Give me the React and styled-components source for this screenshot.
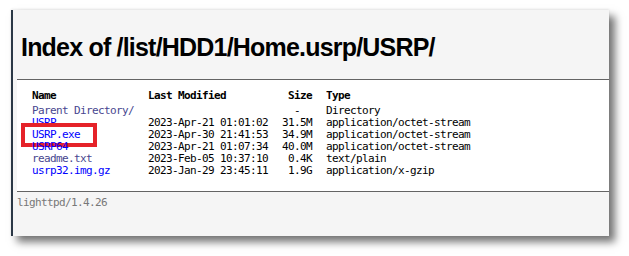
import styled, { createGlobalStyle } from "styled-components";

const GlobalStyle = createGlobalStyle`
  html, body {
    margin: 0;
    padding: 0;
    background: #ffffff;
  }
  body {
    min-height: 256px;
  }
`;

// browser window holding the lighttpd listing
const Window = styled.div`
  margin: 10px 0 0 11px;
  width: 596px;
  height: 226px;
  background-color: #f5f5f5;
  border-left: 2px solid #2b3846;
  box-shadow: 6px 6px 8px rgba(0, 0, 0, 0.55), 0 -1px 2px rgba(0, 0, 0, 0.08);
  display: flex;
  flex-direction: column;
  overflow: hidden;
`;

const Title = styled.h2`
  margin: 22px 0 17px 8px;
  font-family: "Liberation Sans", Arial, sans-serif;
  font-size: 25px;
  letter-spacing: -0.8px;
  line-height: 30px;
  font-weight: bold;
  color: #000000;
  white-space: nowrap;
`;

const List = styled.div`
  margin-left: 4px;
  background-color: #ffffff;
  border-top: 1px solid #646464;
  border-bottom: 1px solid #646464;
  padding: 10px 0 14px 15px;
`;

const mono = `
  font-family: "DejaVu Sans Mono", "Liberation Mono", monospace;
  font-size: 11px;
  letter-spacing: -0.62px;
  line-height: 12px;
`;

const Row = styled.div`
  display: grid;
  grid-template-columns: 116px 130px 48px 1fr;
  ${mono}
  color: #000000;
  white-space: pre;
  padding-bottom: ${(p) => (p.$head ? "3px" : "0")};
  font-weight: ${(p) => (p.$head ? "bold" : "normal")};
`;

const Cell = styled.span`
  text-align: ${(p) => (p.$right ? "right" : "left")};
  padding-right: ${(p) => (p.$right ? "14px" : "0")};
`;

const FileLink = styled.a`
  position: relative;
  color: ${(p) => (p.$visited ? "#48468f" : "#0000ff")};
  text-decoration: none;
`;

const Highlight = styled.span`
  position: absolute;
  left: -11px;
  right: -17px;
  top: -5px;
  bottom: -6px;
  border: 4px solid #e52229;
  pointer-events: none;
`;

const Footer = styled.div`
  margin-left: 4px;
  padding-top: 5px;
  ${mono}
  color: #787878;
`;

const files = [
  { name: "Parent Directory/", date: "", size: "-\u00a0\u00a0", type: "Directory", visited: true },
  { name: "USRP", date: "2023-Apr-21 01:01:02", size: "31.5M", type: "application/octet-stream" },
  { name: "USRP.exe", date: "2023-Apr-30 21:41:53", size: "34.9M", type: "application/octet-stream", marked: true },
  { name: "USRP64", date: "2023-Apr-21 01:07:34", size: "40.0M", type: "application/octet-stream" },
  { name: "readme.txt", date: "2023-Feb-05 10:37:10", size: "0.4K", type: "text/plain", visited: true },
  { name: "usrp32.img.gz", date: "2023-Jan-29 23:45:11", size: "1.9G", type: "application/x-gzip" },
];

const App = () => {
  return (
    <>
      <GlobalStyle />
      <Window>
        <Title>Index of /list/HDD1/Home.usrp/USRP/</Title>
        <List>
          <Row $head>
            <Cell>Name</Cell>
            <Cell>Last Modified</Cell>
            <Cell $right>Size</Cell>
            <Cell>Type</Cell>
          </Row>
          {files.map((f) => (
            <Row key={f.name}>
              <Cell>
                <FileLink href="#" $visited={f.visited}>
                  {f.name}
                  {f.marked && <Highlight />}
                </FileLink>
              </Cell>
              <Cell>{f.date}</Cell>
              <Cell $right>{f.size}</Cell>
              <Cell>{f.type}</Cell>
            </Row>
          ))}
        </List>
        <Footer>lighttpd/1.4.26</Footer>
      </Window>
    </>
  );
};

export default App;
